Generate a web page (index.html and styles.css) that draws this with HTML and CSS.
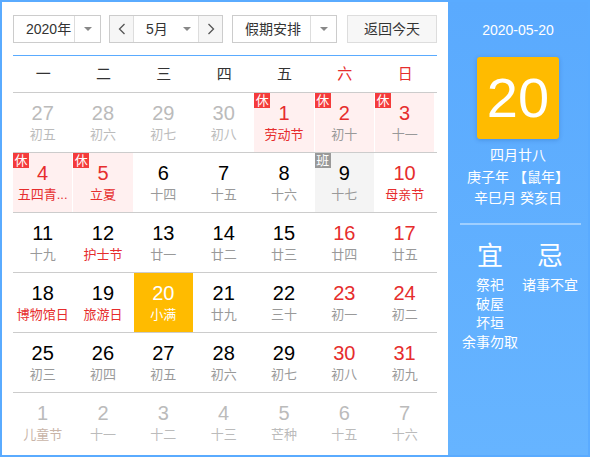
FILE: index.html
```html
<!DOCTYPE html>
<html lang="zh-CN">
<head>
<meta charset="utf-8">
<title>万年历</title>
<link rel="stylesheet" href="styles.css">
</head>
<body>
<div class="cal">
  <div class="main">
    <div class="toolbar">
      <div class="select year">
        <span class="sel-text">2020年</span>
        <span class="sel-arrow"><i class="tri"></i></span>
      </div>
      <div class="month-group">
        <span class="nav"><svg width="8" height="12" viewBox="0 0 8 12"><path d="M6.5 1 L1.5 6 L6.5 11" fill="none" stroke="#555" stroke-width="1.3"/></svg></span>
        <span class="month-label"><span class="m-text">5月</span><i class="tri"></i></span>
        <span class="nav"><svg width="8" height="12" viewBox="0 0 8 12"><path d="M1.5 1 L6.5 6 L1.5 11" fill="none" stroke="#555" stroke-width="1.3"/></svg></span>
      </div>
      <div class="select holiday">
        <span class="sel-text">假期安排</span>
        <span class="sel-arrow"><i class="tri"></i></span>
      </div>
      <button class="today-btn">返回今天</button>
    </div>

    <div class="week-head">
      <span>一</span><span>二</span><span>三</span><span>四</span><span>五</span><span class="red">六</span><span class="red">日</span>
    </div>

    <div class="row">
      <div class="cell other"><span class="num">27</span><span class="lunar">初五</span></div>
      <div class="cell other"><span class="num">28</span><span class="lunar">初六</span></div>
      <div class="cell other"><span class="num">29</span><span class="lunar">初七</span></div>
      <div class="cell other"><span class="num">30</span><span class="lunar">初八</span></div>
      <div class="cell rest"><i class="badge">休</i><span class="num red">1</span><span class="lunar red">劳动节</span></div>
      <div class="cell rest"><i class="badge">休</i><span class="num red">2</span><span class="lunar">初十</span></div>
      <div class="cell rest"><i class="badge">休</i><span class="num red">3</span><span class="lunar">十一</span></div>
    </div>
    <div class="row">
      <div class="cell rest"><i class="badge">休</i><span class="num red">4</span><span class="lunar red">五四青...</span></div>
      <div class="cell rest"><i class="badge">休</i><span class="num red">5</span><span class="lunar red">立夏</span></div>
      <div class="cell"><span class="num">6</span><span class="lunar">十四</span></div>
      <div class="cell"><span class="num">7</span><span class="lunar">十五</span></div>
      <div class="cell"><span class="num">8</span><span class="lunar">十六</span></div>
      <div class="cell work"><i class="badge gray">班</i><span class="num">9</span><span class="lunar">十七</span></div>
      <div class="cell"><span class="num red">10</span><span class="lunar red">母亲节</span></div>
    </div>
    <div class="row">
      <div class="cell"><span class="num">11</span><span class="lunar">十九</span></div>
      <div class="cell"><span class="num">12</span><span class="lunar red">护士节</span></div>
      <div class="cell"><span class="num">13</span><span class="lunar">廿一</span></div>
      <div class="cell"><span class="num">14</span><span class="lunar">廿二</span></div>
      <div class="cell"><span class="num">15</span><span class="lunar">廿三</span></div>
      <div class="cell"><span class="num red">16</span><span class="lunar">廿四</span></div>
      <div class="cell"><span class="num red">17</span><span class="lunar">廿五</span></div>
    </div>
    <div class="row">
      <div class="cell"><span class="num">18</span><span class="lunar red">博物馆日</span></div>
      <div class="cell"><span class="num">19</span><span class="lunar red">旅游日</span></div>
      <div class="cell today"><span class="num">20</span><span class="lunar">小满</span></div>
      <div class="cell"><span class="num">21</span><span class="lunar">廿九</span></div>
      <div class="cell"><span class="num">22</span><span class="lunar">三十</span></div>
      <div class="cell"><span class="num red">23</span><span class="lunar">初一</span></div>
      <div class="cell"><span class="num red">24</span><span class="lunar">初二</span></div>
    </div>
    <div class="row">
      <div class="cell"><span class="num">25</span><span class="lunar">初三</span></div>
      <div class="cell"><span class="num">26</span><span class="lunar">初四</span></div>
      <div class="cell"><span class="num">27</span><span class="lunar">初五</span></div>
      <div class="cell"><span class="num">28</span><span class="lunar">初六</span></div>
      <div class="cell"><span class="num">29</span><span class="lunar">初七</span></div>
      <div class="cell"><span class="num red">30</span><span class="lunar">初八</span></div>
      <div class="cell"><span class="num red">31</span><span class="lunar">初九</span></div>
    </div>
    <div class="row last">
      <div class="cell other"><span class="num">1</span><span class="lunar fest">儿童节</span></div>
      <div class="cell other"><span class="num">2</span><span class="lunar">十一</span></div>
      <div class="cell other"><span class="num">3</span><span class="lunar">十二</span></div>
      <div class="cell other"><span class="num">4</span><span class="lunar">十三</span></div>
      <div class="cell other"><span class="num">5</span><span class="lunar">芒种</span></div>
      <div class="cell other"><span class="num">6</span><span class="lunar">十五</span></div>
      <div class="cell other"><span class="num">7</span><span class="lunar">十六</span></div>
    </div>
  </div>

  <div class="side">
    <div class="side-date">2020-05-20</div>
    <div class="big-day">20</div>
    <div class="side-lines">
      <div>四月廿八</div>
      <div>庚子年 【鼠年】</div>
      <div>辛巳月 癸亥日</div>
    </div>
    <div class="side-sep"></div>
    <div class="yiji">
      <div class="yj-col">
        <div class="yj-title">宜</div>
        <div class="yj-item">祭祀</div>
        <div class="yj-item">破屋</div>
        <div class="yj-item">坏垣</div>
        <div class="yj-item">余事勿取</div>
      </div>
      <div class="yj-col">
        <div class="yj-title">忌</div>
        <div class="yj-item">诸事不宜</div>
      </div>
    </div>
  </div>
</div>
</body>
</html>
```

FILE: styles.css
```css
* { box-sizing: border-box; }
html, body { margin: 0; padding: 0; background: #fff; }
body {
  font-family: "Liberation Sans", "Noto Sans CJK SC", sans-serif;
  color: #333;
}
.cal {
  width: 590px;
  height: 457px;
  border: 2px solid #5aabff;
  display: flex;
}
.main {
  width: 446px;
  padding: 13px 11px 0 11px;
  background: #fff;
}
.toolbar {
  display: flex;
  height: 28px;
}
.select {
  display: flex;
  height: 28px;
  border: 1px solid #ccc;
  background: #fff;
  font-size: 14px;
  line-height: 26px;
  color: #333;
}
.year { width: 88px; }
.year .sel-text { width: 60px; padding-left: 12px; }
.holiday { width: 105px; margin-left: 9px; }
.holiday .sel-text { width: 77px; padding-left: 12px; }
.sel-arrow {
  flex: 1;
  border-left: 1px solid #ddd;
  display: flex;
  align-items: center;
  justify-content: center;
}
.tri {
  display: block;
  width: 0;
  height: 0;
  border-left: 4px solid transparent;
  border-right: 4px solid transparent;
  border-top: 4px solid #888;
}
.month-group {
  display: flex;
  width: 114px;
  height: 28px;
  margin-left: 8px;
  border: 1px solid #ccc;
  font-size: 14px;
  line-height: 26px;
}
.nav {
  width: 23px;
  background: #f6f6f6;
  display: flex;
  align-items: center;
  justify-content: center;
}
.month-label {
  width: 66px;
  border-left: 1px solid #ddd;
  border-right: 1px solid #ddd;
  display: flex;
  align-items: center;
  background: #fff;
}
.m-text { padding-left: 12px; width: 49px; }
.today-btn {
  margin-left: 10px;
  width: 90px;
  height: 28px;
  border: 1px solid #ddd;
  background: #f7f7f7;
  font-family: "Liberation Sans", "Noto Sans CJK SC", sans-serif;
  font-size: 14px;
  color: #333;
  padding: 0;
  line-height: 26px;
}
.week-head {
  margin-top: 12px;
  border-top: 1px solid #5aabff;
  border-bottom: 1px solid #ccc;
  height: 38px;
  display: flex;
  align-items: center;
  font-size: 15px;
  color: #333;
}
.week-head span { width: 60.33px; text-align: center; line-height: 20px; }
.week-head .red { color: #e62d2d; }
.row {
  display: flex;
  height: 60px;
  border-bottom: 1px solid #ccc;
}
.row.last { border-bottom: none; }
.cell {
  position: relative;
  width: 60.33px;
  height: 59px;
  border-right: 1px solid transparent;
  background-clip: padding-box;
  display: flex;
  flex-direction: column;
  align-items: center;
  padding-top: 8px;
  color: #000;
}
.num {
  font-size: 20px;
  line-height: 24px;
  height: 24px;
}
.lunar {
  font-size: 13px;
  line-height: 20px;
  color: #999;
  white-space: nowrap;
}
.red { color: #e62d2d; }
.lunar.red { color: #e62d2d; }
.cell.rest { background-color: #fff0f0; }
.cell.work { background-color: #f4f4f4; }
.cell.other .num { color: #bbb; }
.cell.other .lunar { color: #bbb; }
.cell.other .lunar.fest { color: #c9b5a8; }
.cell.today { background-color: #ffbb00; }
.cell.today .num, .cell.today .lunar { color: #fff; }
.badge {
  position: absolute;
  left: 0;
  top: 0;
  width: 16px;
  height: 15px;
  background: #f43b3b;
  color: #fff;
  font-style: normal;
  font-size: 13px;
  line-height: 15px;
  text-align: center;
}
.badge.gray { background: #999; }

.side {
  flex: 1;
  background: linear-gradient(#5aaafe, #66b4ff);
  color: #fff;
  display: flex;
  flex-direction: column;
  align-items: center;
  padding-top: 18px;
}
.side-date { font-size: 14px; line-height: 20px; }
.big-day {
  margin-top: 17px;
  width: 82px;
  height: 82px;
  border-radius: 3px;
  background: #ffbb00;
  box-shadow: 0 1px 4px rgba(0, 60, 140, 0.25);
  font-size: 56px;
  line-height: 82px;
  text-align: center;
  color: #fff;
}
.side-lines {
  margin-top: 6px;
  font-size: 14px;
  line-height: 21.5px;
  text-align: center;
}
.side-sep {
  margin-top: 13px;
  width: 121px;
  height: 2px;
  background: rgba(255, 255, 255, 0.4);
  align-self: flex-start;
  margin-left: 12px;
}
.yiji {
  display: flex;
  width: 120px;
  align-self: flex-start;
  margin-left: 12px;
  margin-top: 16px;
}
.yj-col {
  width: 60px;
  display: flex;
  flex-direction: column;
  align-items: center;
}
.yj-title {
  font-size: 26px;
  line-height: 30px;
  margin-bottom: 5px;
}
.yj-item {
  font-size: 14px;
  line-height: 19px;
  white-space: nowrap;
}
```
